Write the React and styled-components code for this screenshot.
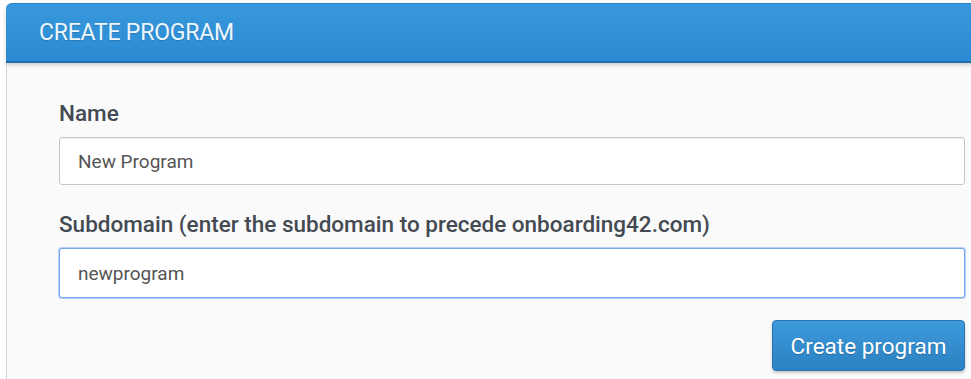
import React from "react";
import styled, { createGlobalStyle } from "styled-components";

const GlobalStyle = createGlobalStyle`
  html, body {
    margin: 0;
    padding: 0;
    background: #fff;
    overflow: hidden;
  }
  body {
    font-family: Roboto, "Liberation Sans", Arial, sans-serif;
  }
`;

const Page = styled.div`
  padding: 3px 0 0 6px;
  height: 379px;
  box-sizing: border-box;
  overflow: hidden;
`;

const Panel = styled.section`
  width: 1000px;
  height: 400px;
  background: #fafafa;
  border-left: 1px solid #d4d4d4;
  border-top-left-radius: 6px;
  box-sizing: border-box;
`;

const Header = styled.header`
  height: 60px;
  display: flex;
  align-items: center;
  padding-left: 33px;
  margin-left: -1px;
  background: linear-gradient(#3898dd, #2a8bd3);
  border-top: 1px solid #2d82c4;
  border-bottom: 2px solid #1e6fae;
  border-top-left-radius: 6px;
  box-shadow: 0 2px 4px rgba(0, 0, 0, 0.18);
  box-sizing: border-box;
`;

const Title = styled.h1`
  margin: 0;
  font-size: 23px;
  font-weight: 400;
  color: #eef6fd;
  letter-spacing: -0.2px;
  text-shadow: 0 1px 1px rgba(0, 0, 0, 0.15);
`;

const Form = styled.form`
  width: 906px;
  padding: 37px 0 0 52px;
  display: flex;
  flex-direction: column;
`;

const Field = styled.div`
  display: flex;
  flex-direction: column;
  margin-bottom: ${(p) => (p.$last ? "22px" : "26px")};
`;

const Label = styled.label`
  font-size: 22.5px;
  font-weight: 500;
  color: #444a52;
  margin-bottom: 11px;
  line-height: 26px;
`;

const Input = styled.input`
  height: ${(p) => (p.$focused ? "50px" : "48px")};
  box-sizing: border-box;
  padding: 0 18px;
  font-family: Roboto, "Liberation Sans", Arial, sans-serif;
  font-size: 19px;
  color: #555;
  background: #fff;
  border: 1px solid ${(p) => (p.$focused ? "#74a6e8" : "#c9c6c2")};
  border-radius: 3px;
  box-shadow: ${(p) =>
    p.$focused
      ? "0 0 0 1px rgba(102, 160, 233, 0.45)"
      : "inset 0 1px 1px rgba(0, 0, 0, 0.06)"};
  outline: none;
`;

const Actions = styled.div`
  display: flex;
  justify-content: flex-end;
`;

const Button = styled.button`
  width: 193px;
  height: 51px;
  font-family: Roboto, "Liberation Sans", Arial, sans-serif;
  font-size: 22.5px;
  color: #fff;
  background: linear-gradient(#3d99da, #2b81c2);
  border: 1px solid #2776b3;
  border-radius: 4px;
  box-shadow: 0 2px 3px rgba(0, 0, 0, 0.2);
  text-shadow: 0 1px 1px rgba(0, 0, 0, 0.2);
  cursor: pointer;
`;

const App = () => (
  <Page>
    <GlobalStyle />
    <Panel>
      <Header>
        <Title>CREATE PROGRAM</Title>
      </Header>
      <Form onSubmit={(e) => e.preventDefault()}>
        <Field>
          <Label>Name</Label>
          <Input defaultValue="New Program" />
        </Field>
        <Field $last>
          <Label>Subdomain (enter the subdomain to precede onboarding42.com)</Label>
          <Input $focused defaultValue="newprogram" />
        </Field>
        <Actions>
          <Button type="submit">Create program</Button>
        </Actions>
      </Form>
    </Panel>
  </Page>
);

export default App;
